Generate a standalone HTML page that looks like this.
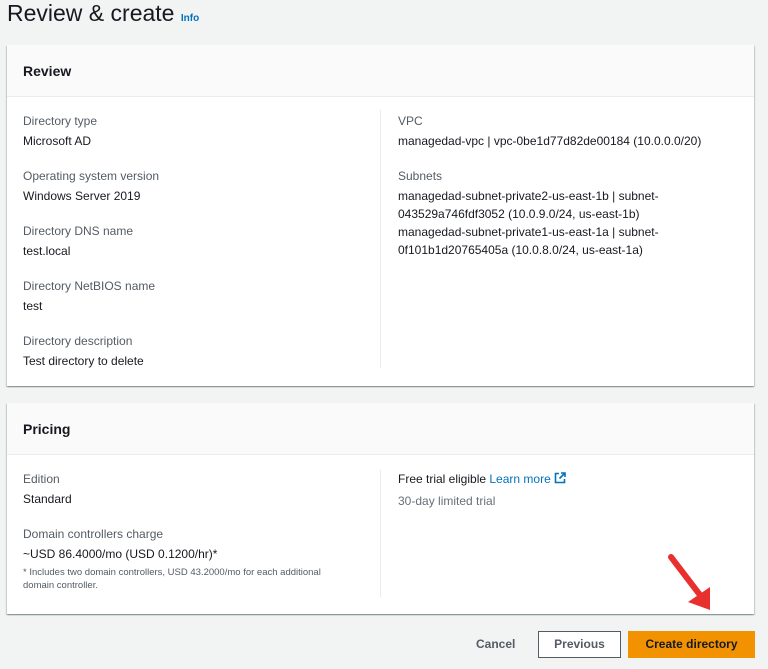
<!DOCTYPE html>
<html><head><style>
*{margin:0;padding:0;box-sizing:border-box}
body{width:768px;height:669px;background:#f2f3f3;font-family:"Liberation Sans",sans-serif;position:relative;overflow:hidden;color:#16191f}
.a{position:absolute;white-space:nowrap}
.t{font-size:23px;color:#16191f}
.info{font-size:10px;color:#0073bb;font-weight:bold}
.panel{position:absolute;left:7px;width:747px;background:#fff;box-shadow:0 1px 1px rgba(0,28,36,.3),1px 1px 1px rgba(0,28,36,.15),-1px 1px 1px rgba(0,28,36,.15)}
.hd{height:52px;background:#fafafa;border-bottom:1px solid #eaeded}
.h{font-size:14px;font-weight:bold;left:16px;top:18px}
.l{font-size:12px;color:#545b64}
.v{font-size:12px;color:#16191f}
.vl{position:absolute;left:373px;width:1px;background:#eaeded}
</style></head><body>
<div class="a t" style="left:7px;top:0px">Review &amp; create <span class="info">Info</span></div>

<div class="panel" style="top:45px;height:341px">
 <div class="hd"></div>
 <div class="a h">Review</div>
 <div class="vl" style="top:65px;height:258px"></div>
 <div class="a l" style="left:16px;top:69px">Directory type</div>
 <div class="a v" style="left:16px;top:89px">Microsoft AD</div>
 <div class="a l" style="left:16px;top:124px">Operating system version</div>
 <div class="a v" style="left:16px;top:144px">Windows Server 2019</div>
 <div class="a l" style="left:16px;top:179px">Directory DNS name</div>
 <div class="a v" style="left:16px;top:199px">test.local</div>
 <div class="a l" style="left:16px;top:234px">Directory NetBIOS name</div>
 <div class="a v" style="left:16px;top:254px">test</div>
 <div class="a l" style="left:16px;top:289px">Directory description</div>
 <div class="a v" style="left:16px;top:309px">Test directory to delete</div>
 <div class="a l" style="left:391px;top:69px">VPC</div>
 <div class="a v" style="left:391px;top:89px">managedad-vpc | vpc-0be1d77d82de00184 (10.0.0.0/20)</div>
 <div class="a l" style="left:391px;top:124px">Subnets</div>
 <div class="a v" style="left:391px;top:144px">managedad-subnet-private2-us-east-1b | subnet-</div>
 <div class="a v" style="left:391px;top:162px">043529a746fdf3052 (10.0.9.0/24, us-east-1b)</div>
 <div class="a v" style="left:391px;top:180px">managedad-subnet-private1-us-east-1a | subnet-</div>
 <div class="a v" style="left:391px;top:198px">0f101b1d20765405a (10.0.8.0/24, us-east-1a)</div>
</div>

<div class="panel" style="top:403px;height:211px">
 <div class="hd"></div>
 <div class="a h">Pricing</div>
 <div class="vl" style="top:67px;height:127px"></div>
 <div class="a l" style="left:16px;top:69px">Edition</div>
 <div class="a v" style="left:16px;top:89px">Standard</div>
 <div class="a l" style="left:16px;top:124px">Domain controllers charge</div>
 <div class="a v" style="left:16px;top:144px">~USD 86.4000/mo (USD 0.1200/hr)*</div>
 <div class="a l" style="left:16px;top:164px;font-size:9.5px">* Includes two domain controllers, USD 43.2000/mo for each additional</div>
 <div class="a l" style="left:16px;top:177px;font-size:9.5px">domain controller.</div>
 <div class="a v" style="left:391px;top:69px">Free trial eligible <span style="color:#0073bb">Learn more</span>
  <svg width="12" height="12" viewBox="0 0 12 12" style="vertical-align:-1px"><path d="M5 1.5H1.5v9h9V7" fill="none" stroke="#0073bb" stroke-width="1.6"/><path d="M7 1h4v4M11 1L5.5 6.5" fill="none" stroke="#0073bb" stroke-width="1.6"/></svg></div>
 <div class="a l" style="left:391px;top:91px;color:#687078">30-day limited trial</div>
</div>

<div class="a" style="left:476px;top:637px;font-size:12px;font-weight:bold;color:#545b64">Cancel</div>
<div class="a" style="left:538px;top:631px;width:83px;height:27px;border:1px solid #545b64;background:#fff;font-size:12px;font-weight:bold;color:#545b64;text-align:center;line-height:25px">Previous</div>
<div class="a" style="left:628px;top:631px;width:127px;height:27px;background:#f39200;font-size:12px;font-weight:bold;color:#16191f;text-align:center;line-height:27px">Create directory</div>

<svg class="a" style="left:660px;top:550px" width="60" height="64" viewBox="0 0 60 64">
 <line x1="11" y1="7" x2="40" y2="45" stroke="#e8312f" stroke-width="6" stroke-linecap="round"/>
 <polygon points="28,52 50,37 50,60" fill="#e8312f"/>
</svg>
</body></html>
